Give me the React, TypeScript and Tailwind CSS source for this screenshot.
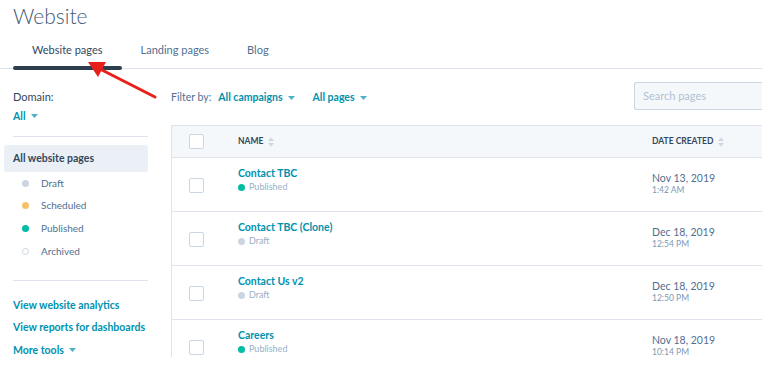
import React from 'react';

const statuses = [
    { label: 'Draft', dot: 'bg-[#cbd6e2]' },
    { label: 'Scheduled', dot: 'bg-[#f5c26b]' },
    { label: 'Published', dot: 'bg-[#00bda5]' },
    { label: 'Archived', dot: 'bg-white border border-[#cbd6e2]' },
];

const pages = [
    { name: 'Contact TBC', status: 'Published', date: 'Nov 13, 2019', time: '1:42 AM' },
    { name: 'Contact TBC (Clone)', status: 'Draft', date: 'Dec 18, 2019', time: '12:54 PM' },
    { name: 'Contact Us v2', status: 'Draft', date: 'Dec 18, 2019', time: '12:50 PM' },
    { name: 'Careers', status: 'Published', date: 'Nov 18, 2019', time: '10:14 PM' },
];

const Caret = () => (
    <svg width="7" height="4" viewBox="0 0 7 4" className="ml-[5px] inline-block opacity-70">
        <path d="M0 0 L7 0 L3.5 4 Z" fill="currentColor" />
    </svg>
);

const Sort = () => (
    <svg width="6" height="10" viewBox="0 0 6 10" className="ml-[5px]">
        <path d="M0 4 L3 0.5 L6 4 Z" fill="#cbd6e2" />
        <path d="M0 6 L3 9.5 L6 6 Z" fill="#cbd6e2" />
    </svg>
);

const Checkbox = () => (
    <div className="h-[15px] w-[15px] rounded-[2px] border border-[#cbd6e2] bg-white" />
);

const App = () => {
    return (
        <div className="relative h-[366px] w-[768px] bg-white font-['Lato',sans-serif]">
            <div className="h-[357px] w-[762px] overflow-hidden">
                {/* heading */}
                <h1 className="pl-[13px] pt-[3px] text-[21px] font-light leading-[26px] text-[#425b76]">
                    Website
                </h1>

                {/* tabs */}
                <div className="relative flex h-[40px] border-b border-[#dfe3eb] pl-[13px]">
                    {['Website pages', 'Landing pages', 'Blog'].map((tab, index) => (
                        <div
                            key={tab}
                            className={`relative flex items-center px-[19px] pt-[4px] text-[11px] ${
                                index === 0 ? 'text-[#33475b]' : 'text-[#516f90]'
                            }`}
                        >
                            {tab}
                            {index === 0 && (
                                <div className="absolute bottom-[-2px] left-0 right-0 h-[4px] rounded-full bg-[#2d3e50]" />
                            )}
                        </div>
                    ))}
                </div>

                <div className="flex">
                    {/* sidebar */}
                    <div className="w-[171px] shrink-0 pl-[13px] pr-[23px]">
                        <div className="pt-[20px] text-[11px] leading-[16px] text-[#33475b]">
                            Domain:
                        </div>
                        <div className="mt-[3px] flex items-center text-[10.5px] font-bold leading-[16px] text-[#0091ae]">
                            All
                            <Caret />
                        </div>
                        <div className="mt-[12px] border-t border-[#dfe3eb]" />
                        <div className="-ml-[9px] mt-[8px] flex h-[27px] items-center rounded-[3px] bg-[#eaf0f6] pl-[9px] text-[10.5px] font-bold text-[#33475b]">
                            All website pages
                        </div>
                        {statuses.map((s) => (
                            <div key={s.label} className="flex h-[22.67px] items-center pl-[9px] text-[10px] text-[#516f90]">
                                <span className={`h-[7px] w-[7px] rounded-full ${s.dot}`} />
                                <span className="ml-[12px]">{s.label}</span>
                            </div>
                        ))}
                        <div className="mt-[17px] border-t border-[#dfe3eb]" />
                        <div className="mt-[13px] flex flex-col whitespace-nowrap text-[10.5px] font-bold text-[#0091ae]">
                            <span className="leading-[22.5px]">View website analytics</span>
                            <span className="leading-[22.5px]">View reports for dashboards</span>
                            <span className="flex items-center leading-[22.5px]">
                                More tools
                                <Caret />
                            </span>
                        </div>
                    </div>

                    {/* main */}
                    <div className="min-w-0 flex-1">
                        <div className="mt-[13px] flex h-[28px] items-center">
                            <div className="flex flex-1 items-center pt-[3px] text-[10.5px]">
                                <span className="text-[#516f90]">Filter by:</span>
                                <span className="ml-[7px] flex items-center font-bold text-[#0091ae]">
                                    All campaigns
                                    <Caret />
                                </span>
                                <span className="ml-[18px] flex items-center font-bold text-[#0091ae]">
                                    All pages
                                    <Caret />
                                </span>
                            </div>
                            <div className="flex h-[28px] w-[128px] items-center rounded-l-[3px] border border-r-0 border-[#cbd6e2] bg-[#f5f8fa] pl-[8px] text-[11px] text-[#b0c1d4]">
                                Search pages
                            </div>
                        </div>

                        {/* table */}
                        <div className="mt-[15px] border-l border-t border-[#dfe3eb]">
                            <div className="flex h-[32px] items-center border-b border-[#dfe3eb] bg-[#f5f8fa] text-[8.5px] font-bold uppercase text-[#33475b]">
                                <div className="w-[66px] pl-[17px]">
                                    <Checkbox />
                                </div>
                                <div className="flex w-[414px] items-center">
                                    Name
                                    <Sort />
                                </div>
                                <div className="flex items-center">
                                    Date created
                                    <Sort />
                                </div>
                            </div>
                            {pages.map((page, index) => (
                                <div key={index} className="flex h-[54px] border-b border-[#dfe3eb]">
                                    <div className="flex w-[66px] items-center pl-[17px] pt-[2px]">
                                        <Checkbox />
                                    </div>
                                    <div className="w-[414px] pt-[7px]">
                                        <div className="text-[10.5px] font-bold leading-[16px] text-[#0091ae]">
                                            {page.name}
                                        </div>
                                        <div className="flex items-center text-[9px] leading-[12px] text-[#99afc4]">
                                            <span
                                                className={`mr-[4px] h-[7px] w-[7px] rounded-full ${
                                                    page.status === 'Published' ? 'bg-[#00bda5]' : 'bg-[#cbd6e2]'
                                                }`}
                                            />
                                            {page.status}
                                        </div>
                                    </div>
                                    <div className="pt-[13px]">
                                        <div className="text-[10.5px] leading-[14px] text-[#516f90]">{page.date}</div>
                                        <div className="text-[8.5px] leading-[11px] text-[#7c98b6]">{page.time}</div>
                                    </div>
                                </div>
                            ))}
                        </div>
                    </div>
                </div>
            </div>

            {/* red annotation arrow */}
            <svg className="pointer-events-none absolute left-0 top-0" width="768" height="366">
                <line x1="155" y1="97" x2="100" y2="69" stroke="#e8201a" strokeWidth="3" strokeLinecap="round" />
                <path d="M88 62 L106 62 L98 77 Z" fill="#e8201a" />
            </svg>
        </div>
    );
};

export default App;
